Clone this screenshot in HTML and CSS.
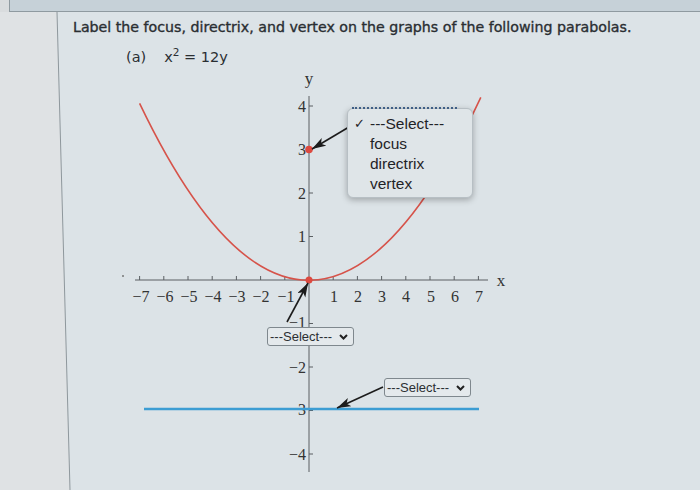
FILE: index.html
```html
<!DOCTYPE html>
<html>
<head>
<meta charset="utf-8">
<link rel="stylesheet" href="styles.css">
</head>
<body>
<div class="topbar"><div class="topbar-edge"></div><div class="topbar-main"></div></div>
<div class="page">
  <div class="gutter">
    <svg class="gutter-svg" width="72" height="478" viewBox="0 0 72 478">
      <polygon points="0,0 57,0 70,478 0,478" fill="#dfe2e4"/>
      <line x1="57" y1="0" x2="70" y2="478" stroke="#8e979c" stroke-width="1"/>
    </svg>
  </div>
  <div class="content">
    <p class="prompt">Label the focus, directrix, and vertex on the graphs of the following parabolas.</p>
    <p class="part"><span class="part-label">(a)</span><span class="eq">x<sup>2</sup> = 12y</span></p>
    <div class="graph">
      <svg class="plot" width="400" height="414" viewBox="110 66 400 414">
        <defs>
          <marker id="ah" markerUnits="userSpaceOnUse" markerWidth="16" markerHeight="10" refX="14" refY="4.5" orient="auto">
            <path d="M0,0 L14,4.5 L0,9 L3.5,4.5 Z" fill="#1c1c1c"/>
          </marker>
        </defs>
        <circle cx="123" cy="276" r="1" fill="#777"/>
        <!-- axes -->
        <line x1="135" y1="280" x2="488" y2="280" stroke="#5a5f63" stroke-width="1"/>
        <line x1="309" y1="96" x2="309" y2="472" stroke="#5a5f63" stroke-width="1"/>
        <g stroke="#5a5f63" stroke-width="1">
          <line x1="139.6" y1="276" x2="139.6" y2="280"/>
          <line x1="163.8" y1="276" x2="163.8" y2="280"/>
          <line x1="188" y1="276" x2="188" y2="280"/>
          <line x1="212.2" y1="276" x2="212.2" y2="280"/>
          <line x1="236.4" y1="276" x2="236.4" y2="280"/>
          <line x1="260.6" y1="276" x2="260.6" y2="280"/>
          <line x1="284.8" y1="276" x2="284.8" y2="280"/>
          <line x1="333.2" y1="276" x2="333.2" y2="280"/>
          <line x1="357.4" y1="276" x2="357.4" y2="280"/>
          <line x1="381.6" y1="276" x2="381.6" y2="280"/>
          <line x1="405.8" y1="276" x2="405.8" y2="280"/>
          <line x1="430" y1="276" x2="430" y2="280"/>
          <line x1="454.2" y1="276" x2="454.2" y2="280"/>
          <line x1="478.4" y1="276" x2="478.4" y2="280"/>
          <line x1="309" y1="106" x2="313" y2="106"/>
          <line x1="309" y1="149.5" x2="313" y2="149.5"/>
          <line x1="309" y1="193" x2="313" y2="193"/>
          <line x1="309" y1="236.5" x2="313" y2="236.5"/>
          <line x1="309" y1="323.5" x2="313" y2="323.5"/>
          <line x1="309" y1="367" x2="313" y2="367"/>
          <line x1="309" y1="410.5" x2="313" y2="410.5"/>
          <line x1="309" y1="454" x2="313" y2="454"/>
        </g>
        <g class="tick-x" text-anchor="middle">
          <text x="141" y="302">−7</text>
          <text x="165" y="302">−6</text>
          <text x="189" y="302">−5</text>
          <text x="213" y="302">−4</text>
          <text x="237" y="302">−3</text>
          <text x="261" y="302">−2</text>
          <text x="286" y="302">−1</text>
          <text x="334" y="302">1</text>
          <text x="358" y="302">2</text>
          <text x="382" y="302">3</text>
          <text x="406" y="302">4</text>
          <text x="431" y="302">5</text>
          <text x="455" y="302">6</text>
          <text x="479" y="302">7</text>
        </g>
        <g class="tick-y" text-anchor="end">
          <text x="306" y="111.5">4</text>
          <text x="306" y="155">3</text>
          <text x="306" y="198.5">2</text>
          <text x="306" y="242">1</text>
          <text x="306" y="328">−1</text>
          <text x="306" y="372.5">−2</text>
          <text x="306" y="415">−3</text>
          <text x="306" y="459.5">−4</text>
        </g>
        <text class="axis-name" x="309" y="84" text-anchor="middle">y</text>
        <text class="axis-name" x="501" y="286" text-anchor="middle">x</text>
        <!-- directrix -->
        <line x1="144" y1="409" x2="479" y2="409" stroke="#3c9dd3" stroke-width="2.5"/>
        <!-- parabola -->
        <path d="M139.6,103.4 Q310.2,460.2 480.8,97.3" fill="none" stroke="#d6534a" stroke-width="1.6"/>
        <circle cx="309" cy="149.5" r="3.8" fill="#dd4a40"/>
        <circle cx="309" cy="280" r="3.5" fill="#dd4a40"/>
        <!-- arrows -->
        <g stroke="#1c1c1c" stroke-width="1.6">
          <line x1="349" y1="127" x2="312" y2="149" marker-end="url(#ah)"/>
          <line x1="287" y1="322" x2="308" y2="283" marker-end="url(#ah)"/>
          <line x1="383" y1="387" x2="337" y2="408" marker-end="url(#ah)"/>
        </g>
      </svg>

      <div class="menu">
        <div class="menu-focus"></div>
        <div class="menu-item"><span class="check">✓</span><span>---Select---</span></div>
        <div class="menu-item"><span class="check"></span><span>focus</span></div>
        <div class="menu-item"><span class="check"></span><span>directrix</span></div>
        <div class="menu-item"><span class="check"></span><span>vertex</span></div>
      </div>

      <div class="select sel-vertex"><span>---Select---</span><svg class="chev" width="9" height="6" viewBox="0 0 9 6"><polyline points="1,1 4.5,4.5 8,1" fill="none" stroke="#222" stroke-width="2"/></svg></div>
      <div class="select sel-directrix"><span>---Select---</span><svg class="chev" width="9" height="6" viewBox="0 0 9 6"><polyline points="1,1 4.5,4.5 8,1" fill="none" stroke="#222" stroke-width="2"/></svg></div>
    </div>
  </div>
</div>
</body>
</html>
```

FILE: styles.css
```css
html, body {
  margin: 0;
  padding: 0;
}
body {
  width: 700px;
  height: 490px;
  overflow: hidden;
  background: #dce3e7;
  font-family: "DejaVu Sans", Verdana, sans-serif;
  color: #2b2f33;
}
.topbar {
  display: flex;
  height: 12px;
}
.topbar-edge {
  width: 9px;
  background: #d9dcde;
}
.topbar-main {
  flex: 1;
  background: #c6d1d8;
  border-left: 1px solid #8f9aa0;
  border-bottom: 1px solid #8f9aa0;
}
.page {
  display: flex;
  height: 478px;
}
.gutter {
  width: 72px;
  flex: none;
}
.gutter-svg {
  display: block;
}
.content {
  flex: 1;
  padding-left: 1px;
}
.prompt {
  margin: 6px 0 0 0;
  font-size: 14.2px;
  line-height: 18px;
  color: #2a2e32;
  -webkit-text-stroke: 0.35px #2a2e32;
  white-space: nowrap;
}
.part {
  margin: 12px 0 0 53px;
  display: flex;
  gap: 18px;
  font-size: 14.5px;
  line-height: 18px;
  color: #2a2e32;
}
.part sup {
  font-size: 10.5px;
  line-height: 0;
}
.graph {
  position: relative;
  width: 400px;
  height: 414px;
  margin: 0 0 0 37px;
}
.plot {
  display: block;
}
.tick-x text, .tick-y text {
  font-family: "Liberation Serif", "Times New Roman", serif;
  font-size: 16px;
  fill: #333;
}
.axis-name {
  font-family: "Liberation Serif", "Times New Roman", serif;
  font-size: 17px;
  fill: #333;
}
.menu {
  position: absolute;
  left: 237px;
  top: 42px;
  width: 126px;
  height: 90px;
  box-sizing: border-box;
  padding: 5px 0;
  background: #dfe5e8;
  border: 1px solid #b7bfc4;
  border-radius: 6px;
  box-shadow: 0 2px 6px rgba(0, 0, 0, 0.28);
  font-family: "Liberation Sans", Arial, sans-serif;
  font-size: 15.5px;
  color: #1f2327;
}
.menu-focus {
  position: absolute;
  left: 4px;
  top: -2px;
  width: 105px;
  border-top: 2px dotted #3f5f86;
}
.menu-item {
  display: flex;
  align-items: center;
  height: 20px;
  line-height: 20px;
}
.check {
  width: 22px;
  flex: none;
  text-align: center;
  font-size: 13px;
}
.select {
  position: absolute;
  display: flex;
  align-items: center;
  justify-content: space-between;
  width: 87px;
  height: 19px;
  box-sizing: border-box;
  padding: 0 5px 0 2px;
  background: #e4e9ec;
  border: 1px solid #7f888e;
  border-radius: 3px;
  font-family: "Liberation Sans", Arial, sans-serif;
  font-size: 13px;
  color: #2b2f33;
}
.sel-vertex {
  left: 157px;
  top: 261px;
}
.sel-directrix {
  left: 274px;
  top: 312px;
}
.chev {
  display: block;
}
```
